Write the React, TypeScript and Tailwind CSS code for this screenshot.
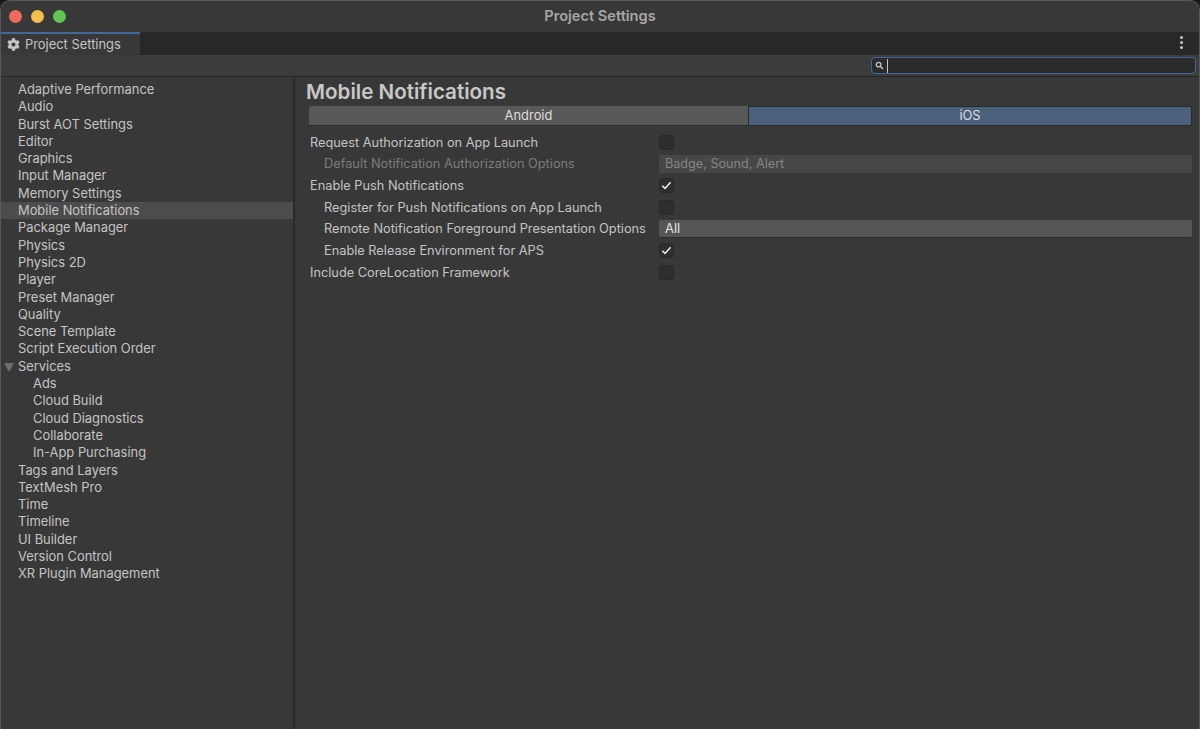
import { FaCog } from "react-icons/fa";

const items = [
  "Adaptive Performance",
  "Audio",
  "Burst AOT Settings",
  "Editor",
  "Graphics",
  "Input Manager",
  "Memory Settings",
  "Mobile Notifications",
  "Package Manager",
  "Physics",
  "Physics 2D",
  "Player",
  "Preset Manager",
  "Quality",
  "Scene Template",
  "Script Execution Order",
  "Services",
  "Ads",
  "Cloud Build",
  "Cloud Diagnostics",
  "Collaborate",
  "In-App Purchasing",
  "Tags and Layers",
  "TextMesh Pro",
  "Time",
  "Timeline",
  "UI Builder",
  "Version Control",
  "XR Plugin Management",
];

const children = ["Ads", "Cloud Build", "Cloud Diagnostics", "Collaborate", "In-App Purchasing"];

function Checkbox({ checked }: { checked?: boolean }) {
  return (
    <div className="flex h-[15px] w-[15px] items-center justify-center rounded-[3px] border border-[#292929] bg-[#2e2e2e]">
      {checked && (
        <svg width="11" height="11" viewBox="0 0 11 11" fill="none">
          <path d="M1.3 5.8 L4 8.4 L9.6 2.2" stroke="#eeeeee" strokeWidth="1.5" />
        </svg>
      )}
    </div>
  );
}

function Row({ label, indent, dim, children }: { label: string; indent?: boolean; dim?: boolean; children: React.ReactNode }) {
  return (
    <div className="flex h-[21.65px] items-center">
      <div className={`w-[349px] shrink-0 whitespace-nowrap text-[12.78px] ${indent ? "pl-[14px]" : ""} ${dim ? "text-[#7c7c7c]" : "text-[#c4c4c4]"}`}>
        {label}
      </div>
      {children}
    </div>
  );
}

export default function App() {
  return (
    <div className="flex h-[729px] w-[1200px] flex-col overflow-hidden bg-[#1a1a1a] font-['Inter',sans-serif] text-[12.9px] text-[#c4c4c4]">
      <div className="flex h-full flex-col overflow-hidden rounded-t-[10px] border-x border-t border-[#5a5a5a] bg-[#383838]">
        {/* title bar */}
        <div className="relative flex h-[31px] shrink-0 items-center justify-center bg-[#383838] text-[14.6px] font-semibold text-[#a6a6a6]">
          <div className="absolute left-[8px] top-[9px] flex gap-[9px]">
            <div className="h-[13px] w-[13px] rounded-full bg-[#ec6a5e]" />
            <div className="h-[13px] w-[13px] rounded-full bg-[#f4bf4f]" />
            <div className="h-[13px] w-[13px] rounded-full bg-[#61c554]" />
          </div>
          Project Settings
        </div>

        {/* tab bar */}
        <div className="flex h-[23px] shrink-0 items-stretch justify-between bg-[#282828]">
          <div className="flex w-[139px] items-center gap-[5px] border-t-2 border-[#3f6a9e] bg-[#383838] pl-[6px]">
            <FaCog size={13} className="text-[#c4c4c4]" />
            <span>Project Settings</span>
          </div>
          <div className="flex w-[36px] items-center justify-center pb-[2px]">
            <div className="flex flex-col gap-[2px]">
              <div className="h-[3px] w-[3px] rounded-full bg-[#c4c4c4]" />
              <div className="h-[3px] w-[3px] rounded-full bg-[#c4c4c4]" />
              <div className="h-[3px] w-[3px] rounded-full bg-[#c4c4c4]" />
            </div>
          </div>
        </div>

        {/* search bar */}
        <div className="flex h-[22px] shrink-0 items-center justify-end border-b border-[#262626] bg-[#3c3c3c] pr-[3px]">
          <div className="flex h-[17px] w-[325px] items-center rounded-[4px] border border-[#3f6a9e] bg-[#2a2a2a] pl-[3px]">
            <svg width="9" height="9" viewBox="0 0 10 10" fill="none">
              <circle cx="4" cy="4" r="2.6" stroke="#c4c4c4" strokeWidth="1.4" />
              <path d="M6 6 L9 9" stroke="#c4c4c4" strokeWidth="1.6" />
            </svg>
            <div className="ml-[3px] h-[14px] w-px bg-[#c4c4c4]" />
          </div>
        </div>

        <div className="flex min-h-0 flex-1">
          {/* sidebar */}
          <div className="w-[294px] shrink-0 border-r-2 border-[#2a2a2a] pt-[4px]">
            {items.map((item) => (
              <div
                key={item}
                className={`relative flex h-[17.3px] items-center whitespace-nowrap ${children.includes(item) ? "pl-[32px]" : "pl-[17px]"} ${item === "Mobile Notifications" ? "bg-[#4c4c4c]" : ""}`}
              >
                {item === "Services" && (
                  <svg className="absolute left-[3px] top-[5px]" width="10" height="9" viewBox="0 0 10 9">
                    <path d="M0 0 H10 L5 9 Z" fill="#6e6e6e" />
                  </svg>
                )}
                {item}
              </div>
            ))}
          </div>

          {/* content */}
          <div className="min-w-0 flex-1 pl-[11px] pr-[7px]">
            <div className="h-[29px] pt-[1px] text-[20.6px] font-semibold leading-[28px] text-[#c8c8c8]">Mobile Notifications</div>
            <div className="ml-[3px] flex h-[20px]">
              <div className="flex w-[439px] items-center justify-center rounded-l-[2px] border-b border-[#2c2c2c] bg-[#585858] text-[#dedede]">Android</div>
              <div className="flex flex-1 items-center justify-center rounded-r-[2px] border border-[#2a2a2a] bg-[#4b607b] text-[#dedede]">iOS</div>
            </div>
            <div className="ml-[4px] mt-[5.5px]">
              <Row label="Request Authorization on App Launch"><Checkbox /></Row>
              <Row label="Default Notification Authorization Options" indent dim>
                <div className="mt-[1px] flex h-[18px] flex-1 items-center rounded-[2px] bg-[#474747] pl-[6px] text-[12.65px] text-[#858585]">Badge, Sound, Alert</div>
              </Row>
              <Row label="Enable Push Notifications"><Checkbox checked /></Row>
              <Row label="Register for Push Notifications on App Launch" indent><Checkbox /></Row>
              <Row label="Remote Notification Foreground Presentation Options" indent>
                <div className="mt-[1px] flex h-[18px] flex-1 items-center rounded-[2px] border-b border-[#2c2c2c] bg-[#555555] pl-[6px] text-[#e4e4e4]">All</div>
              </Row>
              <Row label="Enable Release Environment for APS" indent><Checkbox checked /></Row>
              <Row label="Include CoreLocation Framework"><Checkbox /></Row>
            </div>
          </div>
        </div>
      </div>
    </div>
  );
}
